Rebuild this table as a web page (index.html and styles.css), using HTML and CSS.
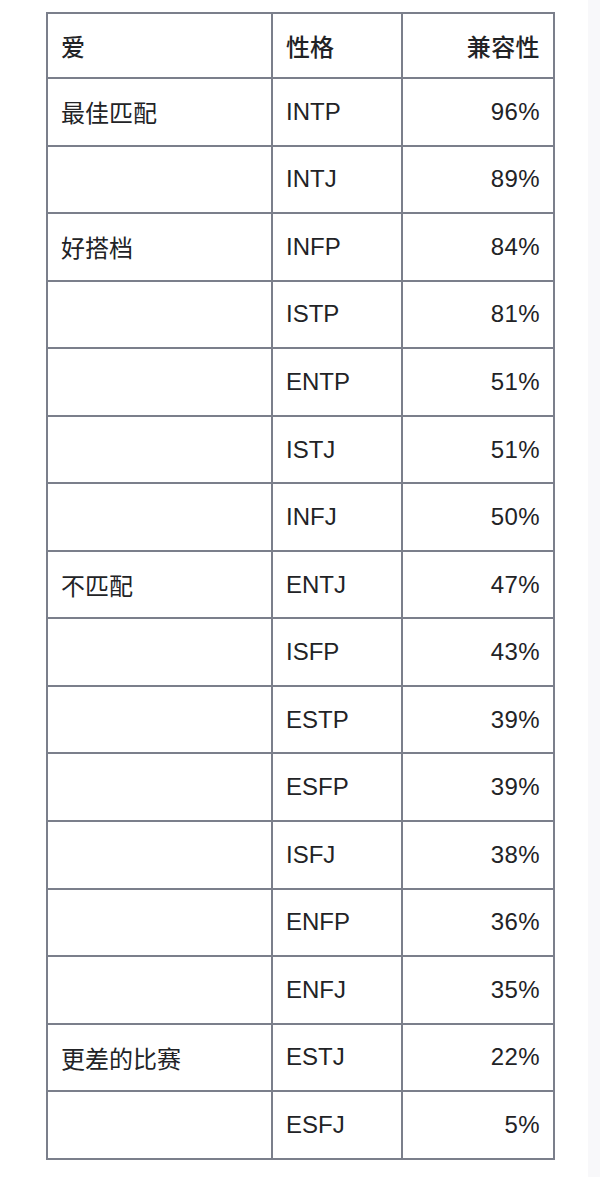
FILE: index.html
```html
<!DOCTYPE html>
<html lang="zh">
<head>
<meta charset="utf-8">
<link rel="stylesheet" href="styles.css">
</head>
<body>
<div class="page">
<table class="compat">
  <colgroup>
    <col class="c1"><col class="c2"><col class="c3">
  </colgroup>
  <thead>
    <tr><th>爱</th><th>性格</th><th class="num">兼容性</th></tr>
  </thead>
  <tbody>
    <tr><td>最佳匹配</td><td>INTP</td><td class="num">96%</td></tr>
    <tr><td></td><td>INTJ</td><td class="num">89%</td></tr>
    <tr><td>好搭档</td><td>INFP</td><td class="num">84%</td></tr>
    <tr><td></td><td>ISTP</td><td class="num">81%</td></tr>
    <tr><td></td><td>ENTP</td><td class="num">51%</td></tr>
    <tr><td></td><td>ISTJ</td><td class="num">51%</td></tr>
    <tr><td></td><td>INFJ</td><td class="num">50%</td></tr>
    <tr><td>不匹配</td><td>ENTJ</td><td class="num">47%</td></tr>
    <tr><td></td><td>ISFP</td><td class="num">43%</td></tr>
    <tr><td></td><td>ESTP</td><td class="num">39%</td></tr>
    <tr><td></td><td>ESFP</td><td class="num">39%</td></tr>
    <tr><td></td><td>ISFJ</td><td class="num">38%</td></tr>
    <tr><td></td><td>ENFP</td><td class="num">36%</td></tr>
    <tr><td></td><td>ENFJ</td><td class="num">35%</td></tr>
    <tr><td>更差的比赛</td><td>ESTJ</td><td class="num">22%</td></tr>
    <tr><td></td><td>ESFJ</td><td class="num">5%</td></tr>
  </tbody>
</table>
</div>
</body>
</html>
```
FILE: styles.css
```css
html, body {
  margin: 0;
  padding: 0;
  background: #ffffff;
}
body {
  font-family: "Liberation Sans", "Noto Sans CJK SC", sans-serif;
  color: #222326;
  background: linear-gradient(to right, #ffffff 588px, #f8f8fa 588px);
  min-height: 1177px;
}
.page {
  padding: 12px 0 0 46px;
}
.compat {
  border-collapse: collapse;
  width: 507px;
  table-layout: fixed;
  font-size: 24px;
}
.c1 { width: 225px; }
.c2 { width: 130px; }
.c3 { width: 152px; }
.compat th,
.compat td {
  border: 2px solid #7b7f8b;
  padding: 0 13px;
  text-align: left;
  vertical-align: middle;
}
.compat th {
  font-weight: 500;
  height: 63px;
}
.compat td {
  font-weight: 400;
  height: 65.56px;
}
.compat .num {
  text-align: right;
  letter-spacing: 0.4px;
}
```
